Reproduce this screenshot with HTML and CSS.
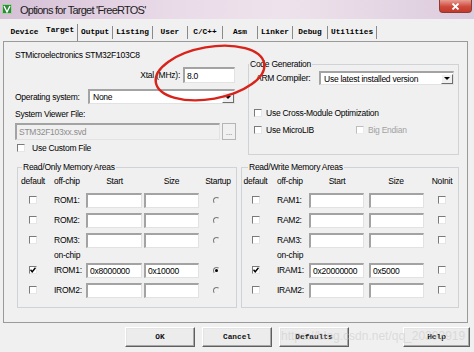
FILE: index.html
```html
<!DOCTYPE html>
<html lang="en">

<head>
    <meta charset="UTF-8">
    <title>Options for Target 'FreeRTOS'</title>
    <link rel="stylesheet" href="styles.css">
</head>

<body>
    <div class="window">
        <div class="titlebar">
            <svg class="app-icon" width="10" height="10" viewBox="0 0 10 10">
                <rect x="0" y="0" width="10" height="10" fill="#2f8a3c"/>
                <rect x="0.5" y="0.5" width="9" height="9" fill="none" stroke="#9fd39a" stroke-width="1"/>
                <path d="M2 2 L5 8 L8 2" fill="none" stroke="#ffffff" stroke-width="1.4"/>
            </svg>
            <span class="title">Options for Target 'FreeRTOS'</span>
            <span class="close">
                <svg width="9" height="7" viewBox="0 0 9 7">
                    <path d="M1.5 0.5 L7.5 6.5 M7.5 0.5 L1.5 6.5" stroke="#ffffff" stroke-width="1.8"/>
                </svg>
            </span>
        </div>

        <div class="tabs">
            <span class="tab first">Device</span>
            <span class="tab active">Target</span>
            <span class="tab">Output</span>
            <span class="tab">Listing</span>
            <span class="tab">User</span>
            <span class="tab">C/C++</span>
            <span class="tab">Asm</span>
            <span class="tab">Linker</span>
            <span class="tab">Debug</span>
            <span class="tab">Utilities</span>
        </div>

        <div class="panel">
            <div class="top">
                <div class="device">
                    <div class="chip">STMicroelectronics STM32F103C8</div>
                    <div class="xtal-row">
                        <span>Xtal (MHz):</span>
                        <span class="edit xtal">8.0</span>
                    </div>
                    <div class="os-row">
                        <span class="os-label">Operating system:</span>
                        <span class="combo os-combo">None<span class="drop"><i></i></span></span>
                    </div>
                    <div class="svf-label">System Viewer File:</div>
                    <div class="svf-row">
                        <span class="edit disabled svf">STM32F103xx.svd</span>
                        <span class="browse">...</span>
                    </div>
                    <div class="check-row custom">
                        <span class="cb"></span>Use Custom File
                    </div>
                </div>

                <fieldset class="group codegen">
                    <legend>Code Generation</legend>
                    <div class="arm-row">
                        <span class="arm-label">ARM Compiler:</span>
                        <span class="combo arm-combo">Use latest installed version<span class="drop"><i></i></span></span>
                    </div>
                    <div class="check-row cg-first">
                        <span class="cb"></span>Use Cross-Module Optimization
                    </div>
                    <div class="check-row cg-second">
                        <span class="opt"><span class="cb"></span>Use MicroLIB</span>
                        <span class="opt off"><span class="cb"></span>Big Endian</span>
                    </div>
                </fieldset>
            </div>

            <div class="memory">
                <fieldset class="group ro">
                    <legend>Read/Only Memory Areas</legend>
                    <div class="mem-grid">
                        <span class="hd">default</span><span class="lbl">off-chip</span><span class="hd">Start</span><span class="hd">Size</span><span class="hd">Startup</span>

                        <span class="cb"></span><span class="lbl">ROM1:</span><span class="edit start"></span><span class="edit size"></span><span class="radio"></span>
                        <span class="cb"></span><span class="lbl">ROM2:</span><span class="edit start"></span><span class="edit size"></span><span class="radio"></span>
                        <span class="cb"></span><span class="lbl">ROM3:</span><span class="edit start"></span><span class="edit size"></span><span class="radio"></span>

                        <span></span><span class="lbl">on-chip</span><span></span><span></span><span></span>

                        <span class="cb checked"><svg width="6" height="6" viewBox="0 0 6 6"><path d="M0.5 2.8 L2.2 4.8 L5.5 0.8" fill="none" stroke="#000" stroke-width="1.4"/></svg></span><span class="lbl">IROM1:</span><span class="edit start">0x8000000</span><span class="edit size">0x10000</span><span class="radio on"></span>
                        <span class="cb"></span><span class="lbl">IROM2:</span><span class="edit start"></span><span class="edit size"></span><span class="radio"></span>
                    </div>
                </fieldset>

                <fieldset class="group rw">
                    <legend>Read/Write Memory Areas</legend>
                    <div class="mem-grid">
                        <span class="hd">default</span><span class="lbl">off-chip</span><span class="hd">Start</span><span class="hd">Size</span><span class="hd">NoInit</span>

                        <span class="cb"></span><span class="lbl">RAM1:</span><span class="edit start"></span><span class="edit size"></span><span class="cb"></span>
                        <span class="cb"></span><span class="lbl">RAM2:</span><span class="edit start"></span><span class="edit size"></span><span class="cb"></span>
                        <span class="cb"></span><span class="lbl">RAM3:</span><span class="edit start"></span><span class="edit size"></span><span class="cb"></span>

                        <span></span><span class="lbl">on-chip</span><span></span><span></span><span></span>

                        <span class="cb checked"><svg width="6" height="6" viewBox="0 0 6 6"><path d="M0.5 2.8 L2.2 4.8 L5.5 0.8" fill="none" stroke="#000" stroke-width="1.4"/></svg></span><span class="lbl">IRAM1:</span><span class="edit start">0x20000000</span><span class="edit size">0x5000</span><span class="cb"></span>
                        <span class="cb"></span><span class="lbl">IRAM2:</span><span class="edit start"></span><span class="edit size"></span><span class="cb"></span>
                    </div>
                </fieldset>
            </div>
        </div>

        <div class="buttons">
            <button class="btn">OK</button>
            <button class="btn">Cancel</button>
            <button class="btn">Defaults</button>
            <button class="btn help">Help</button>
        </div>

        <!-- watermark and red mark drawn over the dialog -->
        <div class="watermark">https://blog.csdn.net/qq_20393919</div>
        <svg class="mark" width="474" height="352" viewBox="0 0 474 352">
            <ellipse cx="210" cy="73" rx="55" ry="26" transform="rotate(-10 210 73)" fill="none" stroke="#d8231b" stroke-width="2.4"/>
        </svg>
    </div>
</body>

</html>
```

FILE: styles.css
```css
* {
    box-sizing: border-box;
}

body {
    margin: 0;
    background: #f0f0f0;
    font-family: "Liberation Sans", Arial, sans-serif;
    font-size: 8.5px;
    letter-spacing: -0.25px;
    color: #000;
}

.window {
    position: relative;
    width: 474px;
    height: 352px;
    overflow: hidden;
    background: #f0f0f0;
}

/* title bar */
.titlebar {
    height: 19px;
    display: flex;
    align-items: center;
    padding-left: 2px;
    background: linear-gradient(to right, #d5c0d6, #e9dae8 35%, #eee3ec 60%, #dccbdd);
}

.app-icon {
    margin-right: 8px;
    margin-top: -2px;
}

.title {
    font-size: 11px;
    letter-spacing: -0.75px;
    color: #1c1c1c;
}

.close {
    margin-left: auto;
    margin-right: 2px;
    align-self: flex-start;
    width: 33px;
    height: 13px;
    display: flex;
    align-items: center;
    justify-content: center;
    border: 1px solid #8c3a32;
    border-top: none;
    border-radius: 0 0 4px 4px;
    background: linear-gradient(#e89c92, #cf4a3c 55%, #c23a2c);
}

/* tabs */
.tabs {
    height: 22px;
    display: flex;
    align-items: flex-end;
    padding-left: 6px;
    font-family: "Liberation Mono", "Courier New", monospace;
    font-size: 7.8px;
    letter-spacing: 0;
    font-weight: bold;
}

.tab {
    min-width: 35px;
    height: 13px;
    line-height: 13px;
    margin-bottom: 2px;
    padding: 0 3px;
    text-align: center;
    border-right: 1px solid #8a8a8a;
}

.tab.first {
    border-right: none;
    min-width: 37px;
}

.tab.active {
    height: 17px;
    margin-bottom: 0;
    padding-bottom: 4px;
}

/* page panel */
.panel {
    margin-left: 3px;
    width: 465px;
    height: 282px;
    border: 1px solid #9a9a9a;
    padding: 0 8px 0 11px;
}

.top {
    display: flex;
    gap: 12px;
}

.device {
    width: 221px;
    padding-top: 8px;
}

.chip {
    height: 11px;
    line-height: 11px;
}

.xtal-row {
    margin-top: 6px;
    display: flex;
    justify-content: flex-end;
    align-items: center;
}

.xtal-row span:first-child {
    margin-right: 3px;
}

.edit {
    display: flex;
    align-items: center;
    height: 15px;
    padding-left: 2px;
    background: #fff;
    border-top: 2px solid #a3a3a3;
    border-left: 2px solid #a3a3a3;
    border-right: 1px solid #e2e2e2;
    border-bottom: 1px solid #e2e2e2;
    white-space: nowrap;
}

.edit.xtal {
    width: 52px;
    height: 16px;
    margin-right: 1px;
}

.edit.disabled {
    background: #f0f0f0;
    color: #8d8d8d;
}

.os-row {
    margin-top: 6px;
    display: flex;
    align-items: center;
}

.os-label {
    width: 73px;
}

.combo {
    position: relative;
    display: flex;
    align-items: center;
    height: 15px;
    padding-left: 3px;
    background: #fff;
    border-top: 2px solid #a3a3a3;
    border-left: 2px solid #a3a3a3;
    border-right: 1px solid #e2e2e2;
    border-bottom: 1px solid #e2e2e2;
}

.os-combo {
    width: 147px;
}

.drop {
    margin-left: auto;
    width: 12px;
    height: 11px;
    display: flex;
    align-items: center;
    justify-content: center;
    background: #f0f0f0;
    border-top: 1px solid #fff;
    border-left: 1px solid #fff;
    border-right: 1px solid #6d6d6d;
    border-bottom: 1px solid #6d6d6d;
}

.drop i {
    width: 0;
    height: 0;
    border-left: 3px solid transparent;
    border-right: 3px solid transparent;
    border-top: 3px solid #000;
}

.svf-label {
    margin-top: 5px;
    height: 11px;
    line-height: 11px;
}

.svf-row {
    margin-top: 3px;
    display: flex;
    gap: 2px;
}

.edit.svf {
    width: 205px;
    height: 17px;
}

.browse {
    width: 14px;
    height: 17px;
    display: flex;
    align-items: flex-end;
    justify-content: center;
    padding-bottom: 2px;
    color: #8d8d8d;
    background: #f0f0f0;
    border: 1px solid #b5b5b5;
}

.check-row {
    display: flex;
    align-items: center;
    height: 10px;
}

.check-row.custom {
    margin-top: 3px;
    padding-left: 2px;
}

.check-row.custom .cb {
    margin-right: 7px;
}

.cb {
    display: inline-flex;
    align-items: center;
    justify-content: center;
    width: 8px;
    height: 8px;
    margin-right: 4px;
    background: #fff;
    border-top: 1px solid #7a7a7a;
    border-left: 1px solid #7a7a7a;
    border-right: 1px solid #e6e6e6;
    border-bottom: 1px solid #e6e6e6;
}

/* group boxes */
.group {
    margin: 0;
    padding: 0 0 7px;
    min-width: 0;
    border: 1px solid #cfd3d6;
}

.group legend {
    padding: 0 1px;
    line-height: 10px;
    height: 10px;
}

.codegen {
    width: 211px;
    margin-top: 17px;
    padding-bottom: 19px;
}

.arm-row {
    margin-top: 2px;
    padding-left: 7px;
    display: flex;
    align-items: center;
}

.arm-label {
    width: 63px;
}

.arm-combo {
    width: 135px;
    height: 14px;
}

.arm-combo .drop {
    height: 10px;
}

.cg-first {
    margin-top: 23px;
    padding-left: 5px;
}

.cg-second {
    margin-top: 7px;
    padding-left: 5px;
}

.opt {
    display: flex;
    align-items: center;
    width: 105px;
}

.opt.off {
    color: #a2a2a2;
}

.opt.off .cb {
    border-color: #bdbdbd #ececec #ececec #bdbdbd;
}

/* memory areas */
.memory {
    margin-top: 7px;
    margin-left: 2px;
    display: flex;
    gap: 4px;
}

.ro {
    width: 220px;
}

.ro legend {
    margin-left: 4px;
}

.rw {
    width: 218px;
}

.rw legend {
    margin-left: 6px;
}

.mem-grid {
    display: grid;
    grid-template-rows: 18px 20px 20px 20px 10px 20px 20px;
    align-items: center;
    justify-items: center;
}

.ro .mem-grid {
    grid-template-columns: 30px 38px 57px 57px 1fr;
}

.rw .mem-grid {
    grid-template-columns: 27px 39px 58px 60px 1fr;
}

.mem-grid .cb {
    margin-right: 0;
}

.mem-grid .lbl {
    justify-self: stretch;
    padding-left: 6px;
    white-space: nowrap;
}

.rw .mem-grid .lbl {
    padding-left: 8px;
}

.mem-grid .edit {
    justify-self: start;
    width: 56px;
}

.ro .edit.size {
    margin-left: 1px;
    width: 55px;
}

.rw .edit.start {
    margin-left: 1px;
    width: 55px;
}

.rw .edit.size {
    margin-left: 3px;
    width: 55px;
}

.radio {
    width: 7px;
    height: 7px;
    border-radius: 50%;
    border: 1px solid;
    border-color: #7a7a7a #f4f4f4 #f4f4f4 #7a7a7a;
    display: flex;
    align-items: center;
    justify-content: center;
    margin-right: 4px;
}

.radio.on::after {
    content: "";
    width: 3px;
    height: 3px;
    border-radius: 50%;
    background: #000;
}

/* dialog buttons */
.buttons {
    display: flex;
    gap: 7px;
    margin-top: 4px;
    padding-left: 125px;
    padding-right: 4px;
}

.btn {
    width: 70px;
    height: 20px;
    padding: 0;
    font-family: "Liberation Mono", "Courier New", monospace;
    font-size: 7.8px;
    font-weight: bold;
    color: #111;
    background: #ececec;
    border: 1px solid;
    border-color: #ffffff #5f5f5f #5f5f5f #ffffff;
    box-shadow: inset -1px -1px #a8a8a8, inset 1px 1px #e4e4e4;
}

.btn.help {
    margin-left: auto;
    width: 67px;
}

.watermark {
    position: absolute;
    left: 281px;
    top: 329px;
    font-size: 12px;
    letter-spacing: 0;
    color: rgba(200, 200, 200, 0.55);
    pointer-events: none;
}

.mark {
    position: absolute;
    left: 0;
    top: 0;
    pointer-events: none;
}
```
